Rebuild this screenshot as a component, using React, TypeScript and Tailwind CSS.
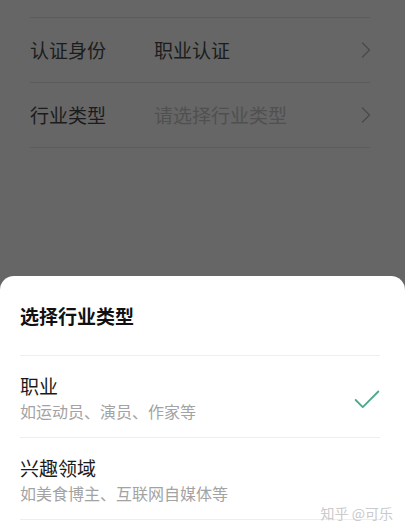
import { Check, ChevronRight } from "lucide-react";

const font = { fontFamily: '"Noto Sans CJK SC", "Noto Sans", sans-serif' };

function FormRow({ label, value, muted }: { label: string; value: string; muted?: boolean }) {
  return (
    <div className="flex h-[65px] items-center border-t border-[#5c5c5c]">
      <span className="w-[124px] text-[19px] text-[#1c1c1c]">{label}</span>
      <span className={"flex-1 text-[19px] " + (muted ? "text-[#505050]" : "text-[#1c1c1c]")}>{value}</span>
      <ChevronRight className="mr-[-10px] h-[28px] w-[28px] text-[#4a4a4a]" strokeWidth={1.2} />
    </div>
  );
}

function Option({ title, desc, checked }: { title: string; desc: string; checked?: boolean }) {
  return (
    <div className="flex h-[82px] items-center border-b border-[#eeeeee]">
      <div className="flex flex-1 flex-col pt-[2px]">
        <span className="text-[19px] leading-[26px] text-[#1a1a1a]">{title}</span>
        <span className="text-[16px] leading-[24px] text-[#a3a3a3]">{desc}</span>
      </div>
      {checked && <Check className="mr-[-4px] mt-[6px] h-[34px] w-[34px] text-[#4daa87]" strokeWidth={1.3} />}
    </div>
  );
}

export default function App() {
  return (
    <div className="flex h-[532px] w-[405px] flex-col overflow-hidden bg-[#666666]" style={font}>
      <div className="h-[276px] pl-[30px] pr-[35px] pt-[17px]">
        <FormRow label="认证身份" value="职业认证" />
        <div className="border-b border-[#5c5c5c]">
          <FormRow label="行业类型" value="请选择行业类型" muted />
        </div>
      </div>
      <div className="relative flex-1 rounded-t-[14px] bg-white pl-[20px] pr-[25px]">
        <div className="flex h-[80px] items-center border-b border-[#eeeeee] pt-[2px]">
          <span className="text-[19px] font-bold text-[#111111]">选择行业类型</span>
        </div>
        <Option title="职业" desc="如运动员、演员、作家等" checked />
        <Option title="兴趣领域" desc="如美食博主、互联网自媒体等" />
        <span className="absolute bottom-[8px] right-[12px] text-[14px] text-[#cacaca]">知乎 @可乐</span>
      </div>
    </div>
  );
}
